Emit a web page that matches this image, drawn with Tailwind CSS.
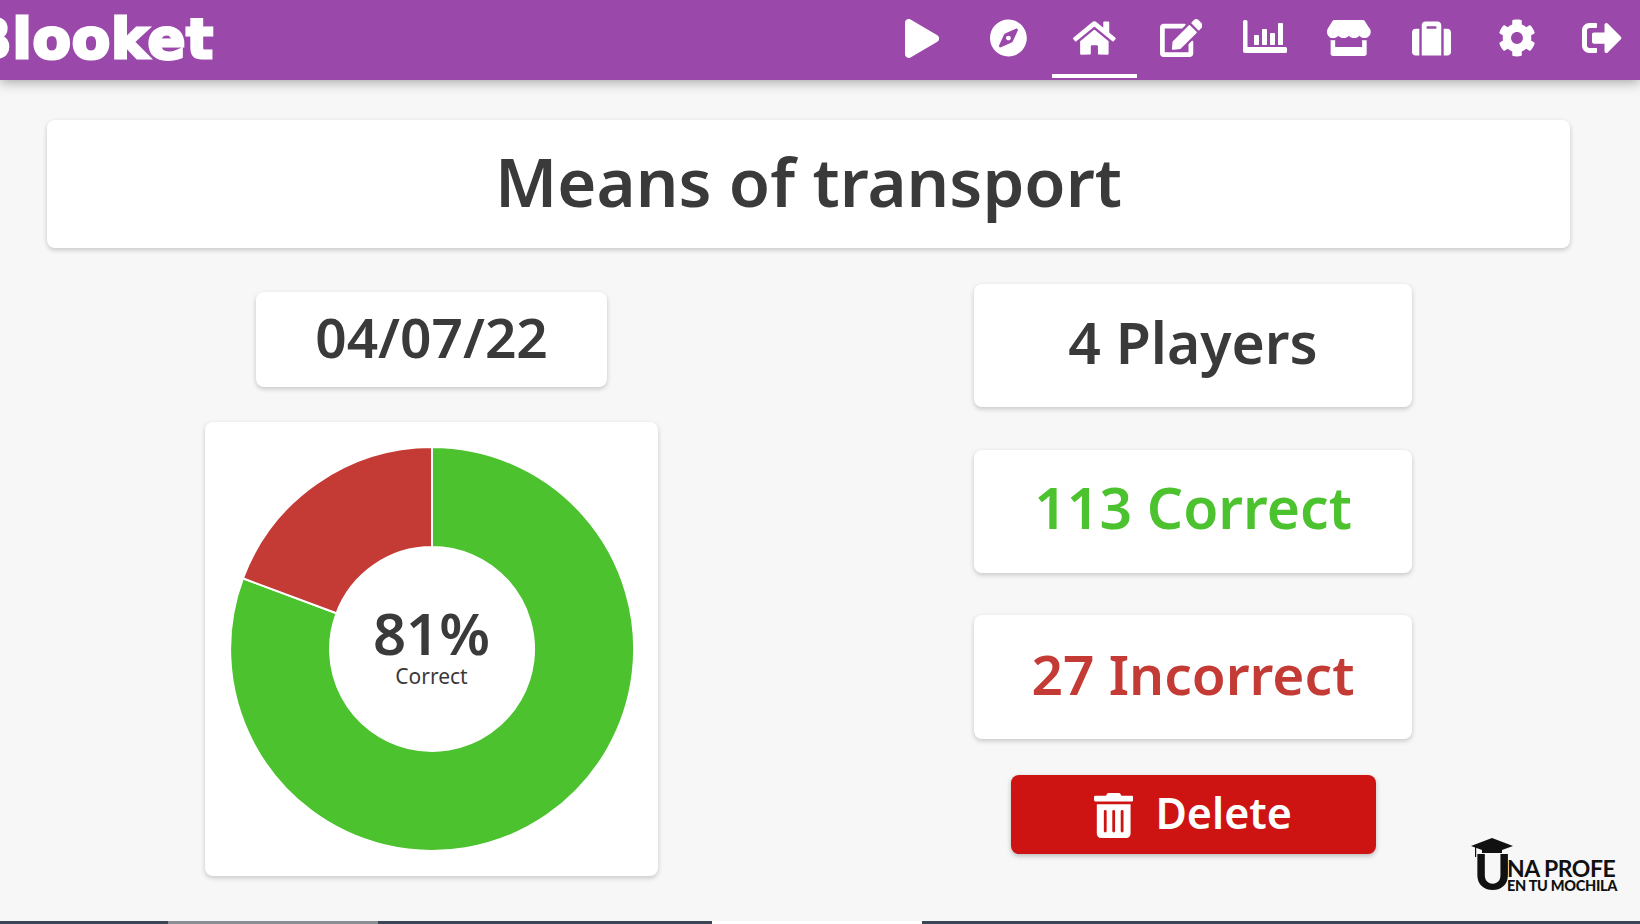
<!DOCTYPE html>
<html>
<head>
<meta charset="utf-8">
<script src="https://cdn.jsdelivr.net/npm/@tailwindcss/browser@4"></script>
</head>
<body class="w-[1640px] h-[924px] overflow-hidden bg-[#f7f7f7] font-['Noto_Sans',sans-serif] text-[#3a3a3a] flex flex-col relative">
<header class="h-20 shrink-0 bg-[#9a49aa] flex items-center justify-between relative z-10 shadow-[0_2px_12px_rgba(0,0,0,0.35)] overflow-hidden">
  <div class="ml-[-31px] mt-[-3px] font-['DejaVu_Sans',sans-serif] font-bold text-[56px] leading-none text-white tracking-[0.8px] [-webkit-text-stroke:3px_white]">Blooket</div>
  <nav class="flex h-20 mr-[-5px] text-white">
    <a class="w-[86px] h-20 flex items-center justify-center pb-1"><svg class="h-[39px]" viewBox="0 0 448 512" fill="currentColor"><path d="M424.4 214.7L72.4 6.6C43.8-10.3 0 6.1 0 47.9V464c0 37.5 40.7 60.1 72.4 41.3l352-208c31.4-18.5 31.5-64.1 0-82.6z"/></svg></a>
    <a class="w-[87px] h-20 flex items-center justify-center pb-1"><svg class="h-[38px]" viewBox="0 0 496 512" fill="currentColor"><path d="M225.38 233.37c-12.5 12.5-12.5 32.76 0 45.25 12.49 12.5 32.76 12.5 45.25 0 12.5-12.5 12.5-32.76 0-45.25-12.5-12.49-32.76-12.49-45.25 0zM248 8C111.03 8 0 119.03 0 256s111.03 248 248 248 248-111.03 248-248S384.97 8 248 8zm126.14 148.05L308.17 300.4a31.938 31.938 0 0 1-15.77 15.77l-144.34 65.97c-16.65 7.61-33.81-9.55-26.2-26.2l65.98-144.35a31.938 31.938 0 0 1 15.77-15.77l144.34-65.97c16.65-7.6 33.8 9.55 26.19 26.2z"/></svg></a>
    <a class="w-[85px] h-20 flex items-center justify-center pb-1 relative"><svg class="h-[38px]" viewBox="0 0 576 512" fill="currentColor"><path d="M280.37 148.26L96 300.11V464a16 16 0 0 0 16 16l112.06-.29a16 16 0 0 0 15.92-16V368a16 16 0 0 1 16-16h64a16 16 0 0 1 16 16v95.64a16 16 0 0 0 16 16.05L464 480a16 16 0 0 0 16-16V300L295.67 148.26a12.19 12.19 0 0 0-15.3 0zM571.6 251.47L488 182.56V44.05a12 12 0 0 0-12-12h-56a12 12 0 0 0-12 12v72.61L318.47 43a48 48 0 0 0-61 0L4.34 251.47a12 12 0 0 0-1.6 16.9l25.5 31A12 12 0 0 0 45.15 301l235.22-193.74a12.19 12.19 0 0 1 15.3 0L530.9 301a12 12 0 0 0 16.9-1.6l25.5-31a12 12 0 0 0-1.7-16.93z"/></svg><span class="absolute left-0 right-0 bottom-[2px] h-[4px] bg-white"></span></a>
    <a class="w-[85px] h-20 flex items-center justify-center pb-1 pl-[3px]"><svg class="h-[38px]" viewBox="0 0 576 512" fill="currentColor"><path d="M402.6 83.2l90.2 90.2c3.8 3.8 3.8 10 0 13.8L274.4 405.6l-92.8 10.3c-12.4 1.4-22.9-9.1-21.5-21.5l10.3-92.8L388.8 83.2c3.8-3.8 10-3.8 13.8 0zm162-22.9l-48.8-48.8c-15.2-15.2-39.9-15.2-55.2 0l-35.4 35.4c-3.8 3.8-3.8 10 0 13.8l90.2 90.2c3.8 3.8 10 3.8 13.8 0l35.4-35.4c15.2-15.3 15.2-40 0-55.2zM384 346.2V448H64V128h229.8c3.2 0 6.2-1.3 8.5-3.5l40-40c7.6-7.6 2.2-20.5-8.5-20.5H48C21.5 64 0 85.5 0 112v352c0 26.5 21.5 48 48 48h352c26.5 0 48-21.5 48-48V306.2c0-10.7-12.9-16-20.5-8.5l-40 40c-2.2 2.3-3.5 5.3-3.5 8.5z"/></svg></a>
    <a class="w-[85px] h-20 flex items-center justify-center pb-2"><svg class="h-[33px]" viewBox="0 0 44 33" fill="currentColor"><path d="M0 1.5A1.5 1.5 0 0 1 1.500 0h1.500A1.500 1.500 0 0 1 4.500 1.500V27h38a1.500 1.500 0 0 1 1.500 1.500v3a1.500 1.500 0 0 1-1.500 1.500H2a2 2 0 0 1-2-2z"/><rect x="11" y="15" width="5" height="10" rx=".8"/><rect x="19" y="9" width="5" height="16" rx=".8"/><rect x="27" y="13" width="5" height="12" rx=".8"/><rect x="35" y="3" width="5" height="22" rx=".8"/></svg></a>
    <a class="w-[84px] h-20 flex items-center justify-center pb-1"><svg class="h-[36px]" viewBox="0 0 616 512" fill="currentColor"><path d="M602 118.6L537.1 15C531.3 5.7 521 0 510 0H106C95 0 84.7 5.7 78.9 15L14 118.6c-33.9 54.1-3.9 129.3 59.4 137.9 4.6.6 9.2.9 13.7.9 29.9 0 56.4-13.1 74.6-33.4 18.2 20.3 44.8 33.4 74.6 33.4 29.9 0 56.4-13.1 74.6-33.4 18.2 20.3 44.8 33.4 74.6 33.4 29.9 0 56.4-13.1 74.6-33.4 18.3 20.3 44.8 33.4 74.6 33.4 4.6 0 9.1-.3 13.7-.9 63.5-8.5 93.6-83.7 59.6-137.9zM529.5 288c-10 0-19.9-1.5-29.5-3.8V384H116v-99.8c-9.6 2.2-19.5 3.8-29.5 3.8-6 0-12.1-.4-18-1.2-5.6-.8-11.1-2.1-16.4-3.6V480c0 17.7 14.3 32 32 32h448c17.7 0 32-14.3 32-32V283.2c-5.4 1.6-10.8 2.9-16.4 3.6-6.1.8-12.1 1.2-18.2 1.2z"/></svg></a>
    <a class="w-[83px] h-20 flex items-center justify-center pb-1 pr-[2px]"><svg class="h-[39px]" viewBox="0 0 512 512" fill="currentColor"><path d="M128 480h256V80c0-26.500-21.500-48-48-48H176c-26.500 0-48 21.500-48 48v400zm64-384h128v32H192V96zm320 80v256c0 26.500-21.500 48-48 48h-48V128h48c26.500 0 48 21.500 48 48zM96 480H48c-26.500 0-48-21.500-48-48V176c0-26.500 21.500-48 48-48h48v352z"/></svg></a>
    <a class="w-[85px] h-20 flex items-center justify-center pb-1"><svg class="h-[38px]" viewBox="0 0 512 512" fill="currentColor"><path d="M487.400 315.700l-42.600-24.600c4.300-23.200 4.300-47 0-70.200l42.600-24.600c4.900-2.800 7.100-8.600 5.500-14-11.100-35.600-30-67.800-54.700-94.600-3.800-4.100-10-5.100-14.800-2.300L380.800 110c-17.900-15.400-38.500-27.300-60.800-35.100V25.800c0-5.600-3.900-10.500-9.400-11.700-36.700-8.200-74.300-7.800-109.200 0-5.500 1.200-9.400 6.100-9.400 11.700V75c-22.200 7.900-42.800 19.800-60.800 35.100L88.700 85.500c-4.900-2.800-11-1.900-14.800 2.300-24.700 26.700-43.600 58.900-54.700 94.600-1.700 5.400.6 11.200 5.500 14L67.300 221c-4.300 23.200-4.300 47 0 70.200l-42.600 24.600c-4.900 2.800-7.100 8.600-5.500 14 11.100 35.600 30 67.800 54.700 94.600 3.800 4.100 10 5.100 14.800 2.300l42.600-24.600c17.900 15.400 38.500 27.300 60.800 35.100v49.200c0 5.600 3.900 10.500 9.400 11.700 36.700 8.200 74.300 7.800 109.200 0 5.500-1.200 9.400-6.100 9.400-11.700v-49.200c22.200-7.900 42.800-19.800 60.800-35.100l42.600 24.600c4.900 2.800 11 1.900 14.800-2.300 24.700-26.700 43.600-58.900 54.700-94.600 1.500-5.500-.7-11.300-5.600-14.100zM256 336c-44.100 0-80-35.900-80-80s35.900-80 80-80 80 35.900 80 80-35.900 80-80 80z"/></svg></a>
    <a class="w-[86px] h-20 flex items-center justify-center pb-1"><svg class="h-[40px]" viewBox="0 0 512 512" fill="currentColor"><path d="M497 273L329 441c-15 15-41 4.500-41-17v-96H152c-13.300 0-24-10.700-24-24v-96c0-13.300 10.700-24 24-24h136V88c0-21.400 25.900-32 41-17l168 168c9.300 9.400 9.300 24.600 0 34zM192 436v-40c0-6.600-5.400-12-12-12H96c-17.700 0-32-14.300-32-32V160c0-17.700 14.300-32 32-32h84c6.600 0 12-5.400 12-12V76c0-6.600-5.400-12-12-12H96c-53 0-96 43-96 96v192c0 53 43 96 96 96h84c6.600 0 12-5.400 12-12z"/></svg></a>
  </nav>
</header>

<main class="flex-1 pt-10 pl-[47px] pr-[70px]">
  <div class="h-[128px] pb-[6px] bg-white rounded-lg shadow-[0_2px_5px_rgba(0,0,0,0.2)] flex items-center justify-center text-[67px] font-semibold leading-none">Means of transport</div>
  <div class="grid grid-cols-[769px_754px]">
    <div class="flex flex-col items-center pt-11">
      <div class="w-[351px] h-[95px] pb-[6px] bg-white rounded-lg shadow-[0_2px_5px_rgba(0,0,0,0.2)] flex items-center justify-center text-[55px] font-semibold leading-none">04/07/22</div>
      <div class="mt-[35px] w-[453px] h-[454px] bg-white rounded-lg shadow-[0_2px_5px_rgba(0,0,0,0.2)] relative flex items-center justify-center">
        <svg class="w-[404px] h-[404px] mt-[-1px]" viewBox="-202 -202 404 404">
          <path fill="#4bc22e" stroke="#fff" stroke-width="2" d="M0 -202A202 202 0 1 1 -189.100 -70.700L-95.500 -35.700A102 102 0 1 0 0 -102Z"/>
          <path fill="#c43a35" stroke="#fff" stroke-width="2" d="M0 -202A202 202 0 0 0 -189.100 -70.700L-95.500 -35.700A102 102 0 0 1 0 -102Z"/>
        </svg>
        <div class="absolute inset-0 flex flex-col items-center justify-center pb-[3px]">
          <div class="text-[58px] font-semibold leading-[52px]">81%</div>
          <div class="mt-[5px] text-[21px] leading-6">Correct</div>
        </div>
      </div>
    </div>
    <div class="flex flex-col items-center pt-9">
      <div class="w-[438px] h-[123px] pb-[6px] bg-white rounded-lg shadow-[0_2px_5px_rgba(0,0,0,0.2)] flex items-center justify-center text-[57px] font-semibold leading-none">4 Players</div>
      <div class="mt-[43px] w-[438px] h-[123px] pb-2 bg-white rounded-lg shadow-[0_2px_5px_rgba(0,0,0,0.2)] flex items-center justify-center text-[57px] font-semibold leading-none text-[#4bc22e]">113 Correct</div>
      <div class="mt-[42px] w-[438px] h-[124px] pb-2 bg-white rounded-lg shadow-[0_2px_5px_rgba(0,0,0,0.2)] flex items-center justify-center text-[55px] font-semibold leading-none text-[#c43a35]">27 Incorrect</div>
      <div class="mt-9 w-[365px] h-[79px] bg-[#ce1313] rounded-lg shadow-[0_2px_5px_rgba(0,0,0,0.25)] flex items-center justify-center gap-[22px] text-[43px] font-semibold leading-none text-white">
        <svg class="h-[45px] mt-[2px]" viewBox="0 0 448 512" fill="currentColor"><path d="M32 464a48 48 0 0 0 48 48h288a48 48 0 0 0 48-48V128H32zm272-256a16 16 0 0 1 32 0v224a16 16 0 0 1-32 0zm-96 0a16 16 0 0 1 32 0v224a16 16 0 0 1-32 0zm-96 0a16 16 0 0 1 32 0v224a16 16 0 0 1-32 0zM432 32H312l-9.400-18.700A24 24 0 0 0 281.100 0H166.800a23.720 23.720 0 0 0-21.400 13.300L136 32H16A16 16 0 0 0 0 48v32a16 16 0 0 0 16 16h416a16 16 0 0 0 16-16V48a16 16 0 0 0-16-16z"/></svg>
        <span class="mt-[-4px]">Delete</span>
      </div>
    </div>
  </div>
</main>

<div class="absolute left-[1470px] top-[838px] w-[150px] h-[56px] text-[#111] font-['Lato',sans-serif]">
  <svg class="absolute left-0 top-0 w-[44px] h-[20px]" viewBox="0 0 44 20" fill="#111"><path d="M22 0L43 8 32 12V15H12V12L1 8Z"/><rect x="5" y="9" width="1.200" height="10"/></svg>
  <div class="absolute left-[4px] top-[3px] text-[50px] leading-[60px] font-black">U</div>
  <div class="absolute left-[37px] top-[19px] text-[23px] leading-[22px] font-bold tracking-[-0.5px] whitespace-nowrap">NA PROFE</div>
  <div class="absolute left-[37px] top-[41px] text-[14.500px] leading-[14px] font-black tracking-[-0.3px] whitespace-nowrap">EN TU MOCHILA</div>
</div>

<div class="h-[3px] shrink-0 bg-[#3a4656] flex">
  <div class="ml-[168px] w-[210px] bg-[#8a8f96]"></div>
  <div class="ml-[334px] w-[210px] bg-white"></div>
</div>
</body>
</html>
